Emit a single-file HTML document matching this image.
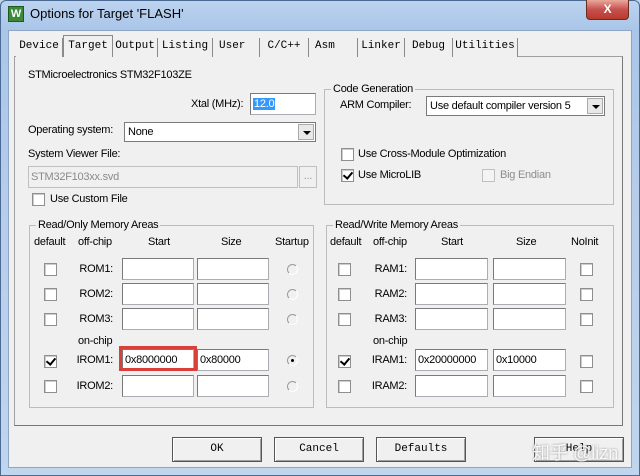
<!DOCTYPE html>
<html><head><meta charset="utf-8"><style>
*{box-sizing:border-box;margin:0;padding:0}
body{width:640px;height:476px;overflow:hidden;background:#c4d6ec;font-family:"Liberation Sans",Arial,sans-serif;font-size:11px;letter-spacing:-0.25px;color:#000;position:relative}
.a{position:absolute;white-space:nowrap}
#frame{position:absolute;left:0;top:0;width:640px;height:476px;background:linear-gradient(#bcd3ef,#a9c5e8 30px,#b6cdea 200px,#c0d5ee);border:1px solid #4a6a94;border-radius:6px 6px 0 0}
#client{position:absolute;left:8px;top:30px;width:624px;height:438px;background:#f0f0f0;border:1px solid #8ea6c4}
.tab{position:absolute;top:38px;height:19px;font-family:"Liberation Mono",monospace;font-size:11px;letter-spacing:0;line-height:17px;text-align:center;border-right:1px solid #8a8a8a;background:#f0f0f0}
#panel{position:absolute;left:14px;top:56px;width:609px;height:370px;border:1px solid #a0a0a0;border-right-color:#777;border-bottom-color:#777;background:#f0f0f0}
.grp{position:absolute;border:1px solid #bcbcbc}
.gt{position:absolute;background:#f0f0f0;padding:0 2px;top:-8px;left:6px;line-height:14px}
.in{position:absolute;background:#fff;border:1px solid #abadb3;border-top-color:#7a7a7a;border-left-color:#7a7a7a;height:22px;line-height:20px;padding-left:2px}
.cb{position:absolute;width:13px;height:13px;background:#fff;border:1px solid #8f8f8f;box-shadow:inset 1px 1px 0 #ccc}
.cb.k::after{content:"";position:absolute;left:3px;top:0px;width:4px;height:7px;border:solid #000;border-width:0 2px 2px 0;transform:rotate(40deg)}
.rd{position:absolute;width:11px;height:11px;border-radius:50%;border:1px solid #9a9a9a;border-right-color:#fff;border-bottom-color:#fff;background:#f0f0f0}
.rd.k::after{content:"";position:absolute;left:3px;top:3px;width:3px;height:3px;border-radius:50%;background:#000}
.sel{position:absolute;background:#fff;border:1px solid #7a7a7a;height:20px;line-height:18px;padding-left:3px}
.sel i{position:absolute;right:1px;top:1px;width:16px;height:16px;background:#e8e8e8;border:1px solid #aaa}
.sel i::after{content:"";position:absolute;left:4px;top:6px;border:4px solid transparent;border-top:4px solid #000;border-bottom:0}
.btn{position:absolute;top:437px;width:90px;height:25px;border:1px solid #555;background:#f0f0f0;box-shadow:inset 1px 1px 0 #fff,inset -1px -1px 0 #a0a0a0;font-family:"Liberation Mono",monospace;font-size:11px;letter-spacing:0;line-height:22px;text-align:center}
.lb{position:absolute;text-align:right;width:60px}
</style></head><body>
<div id="frame"></div>
<div class="a" style="left:8px;top:6px;width:16px;height:16px;background:#3a8a3a;border:1px solid #1e5a1e;color:#fff;font-size:11px;font-weight:bold;line-height:14px;text-align:center">W</div>
<div class="a" style="left:30px;top:6px;font-size:13px;letter-spacing:0">Options for Target 'FLASH'</div>
<div class="a" style="left:586px;top:0;width:43px;height:20px;background:linear-gradient(#e9a99a,#c75050 50%,#b83a2a);border:1px solid #6b2a22;border-top:0;border-radius:0 0 4px 4px;color:#fff;font-weight:bold;text-align:center;line-height:19px;font-size:12px">X</div>
<div id="client"></div>
<div id="panel"></div>
<div class="tab" style="left:16px;width:47px">Device</div>
<div class="tab" style="left:63px;width:50px;top:35px;height:22px;border:1px solid #8a8a8a;border-bottom:0;line-height:20px">Target</div>
<div class="tab" style="left:113px;width:45px">Output</div>
<div class="tab" style="left:158px;width:55px">Listing</div>
<div class="tab" style="left:213px;width:47px;text-align:left;padding-left:6px">User</div>
<div class="tab" style="left:260px;width:49px">C/C++</div>
<div class="tab" style="left:309px;width:49px;text-align:left;padding-left:6px">Asm</div>
<div class="tab" style="left:358px;width:47px">Linker</div>
<div class="tab" style="left:405px;width:48px">Debug</div>
<div class="tab" style="left:453px;width:65px">Utilities</div>

<div class="a" style="left:28px;top:69px">STMicroelectronics STM32F103ZE</div>
<div class="a" style="left:191px;top:98px">Xtal (MHz):</div>
<div class="in" style="left:250px;top:93px;width:66px"><span style="background:#3399ff;color:#fff;padding:0 1px">12.0</span></div>
<div class="a" style="left:28px;top:124px">Operating system:</div>
<div class="sel" style="left:124px;top:122px;width:192px">None<i></i></div>
<div class="a" style="left:28px;top:148px">System Viewer File:</div>
<div class="in" style="left:28px;top:166px;width:270px;background:#f0f0f0;color:#8a8a8a;border-color:#c0c0c0">STM32F103xx.svd</div>
<div class="a" style="left:299px;top:166px;width:18px;height:22px;border:1px solid #c0c0c0;color:#999;text-align:center;line-height:18px">...</div>
<div class="cb" style="left:32px;top:193px"></div>
<div class="a" style="left:50px;top:193px">Use Custom File</div>

<div class="grp" style="left:324px;top:89px;width:290px;height:116px"><div class="gt">Code Generation</div></div>
<div class="a" style="left:340px;top:99px">ARM Compiler:</div>
<div class="sel" style="left:426px;top:96px;width:179px">Use default compiler version 5<i></i></div>
<div class="cb" style="left:341px;top:148px"></div>
<div class="a" style="left:358px;top:148px">Use Cross-Module Optimization</div>
<div class="cb k" style="left:341px;top:169px"></div>
<div class="a" style="left:358px;top:169px">Use MicroLIB</div>
<div class="cb" style="left:482px;top:169px;background:#f4f4f4;border-color:#c0c0c0;box-shadow:none"></div>
<div class="a" style="left:500px;top:169px;color:#8d8d8d">Big Endian</div>

<div class="grp" style="left:29px;top:225px;width:285px;height:183px"><div class="gt">Read/Only Memory Areas</div></div>
<div class="a" style="left:34px;top:236px">default</div>
<div class="a" style="left:78px;top:236px">off-chip</div>
<div class="a" style="left:148px;top:236px">Start</div>
<div class="a" style="left:221px;top:236px">Size</div>
<div class="a" style="left:275px;top:236px">Startup</div>

<div class="grp" style="left:326px;top:225px;width:288px;height:183px"><div class="gt">Read/Write Memory Areas</div></div>
<div class="a" style="left:330px;top:236px">default</div>
<div class="a" style="left:373px;top:236px">off-chip</div>
<div class="a" style="left:441px;top:236px">Start</div>
<div class="a" style="left:516px;top:236px">Size</div>
<div class="a" style="left:571px;top:236px">NoInit</div>

<div class="a" style="left:78px;top:335px">on-chip</div>
<div class="a" style="left:373px;top:335px">on-chip</div>

<div class="cb" style="left:44px;top:263px"></div><div class="lb" style="left:53px;top:263px">ROM1:</div><div class="in" style="left:122px;top:258px;width:72px"></div><div class="in" style="left:197px;top:258px;width:72px"></div><div class="rd" style="left:287px;top:264px"></div>
<div class="cb" style="left:44px;top:288px"></div><div class="lb" style="left:53px;top:288px">ROM2:</div><div class="in" style="left:122px;top:283px;width:72px"></div><div class="in" style="left:197px;top:283px;width:72px"></div><div class="rd" style="left:287px;top:289px"></div>
<div class="cb" style="left:44px;top:313px"></div><div class="lb" style="left:53px;top:313px">ROM3:</div><div class="in" style="left:122px;top:308px;width:72px"></div><div class="in" style="left:197px;top:308px;width:72px"></div><div class="rd" style="left:287px;top:314px"></div>
<div class="cb k" style="left:44px;top:355px"></div><div class="lb" style="left:53px;top:354px">IROM1:</div><div class="in" style="left:122px;top:349px;width:72px">0x8000000</div><div class="in" style="left:197px;top:349px;width:72px">0x80000</div><div class="rd k" style="left:287px;top:355px"></div>
<div class="cb" style="left:44px;top:380px"></div><div class="lb" style="left:53px;top:380px">IROM2:</div><div class="in" style="left:122px;top:375px;width:72px"></div><div class="in" style="left:197px;top:375px;width:72px"></div><div class="rd" style="left:287px;top:381px"></div>
<div class="a" style="left:119px;top:346px;width:78px;height:25px;border:3px solid #d9403a"></div>

<div class="cb" style="left:338px;top:263px"></div><div class="lb" style="left:347px;top:263px">RAM1:</div><div class="in" style="left:415px;top:258px;width:73px"></div><div class="in" style="left:493px;top:258px;width:73px"></div><div class="cb" style="left:580px;top:263px"></div>
<div class="cb" style="left:338px;top:288px"></div><div class="lb" style="left:347px;top:288px">RAM2:</div><div class="in" style="left:415px;top:283px;width:73px"></div><div class="in" style="left:493px;top:283px;width:73px"></div><div class="cb" style="left:580px;top:288px"></div>
<div class="cb" style="left:338px;top:313px"></div><div class="lb" style="left:347px;top:313px">RAM3:</div><div class="in" style="left:415px;top:308px;width:73px"></div><div class="in" style="left:493px;top:308px;width:73px"></div><div class="cb" style="left:580px;top:313px"></div>
<div class="cb k" style="left:338px;top:355px"></div><div class="lb" style="left:347px;top:354px">IRAM1:</div><div class="in" style="left:415px;top:349px;width:73px">0x20000000</div><div class="in" style="left:493px;top:349px;width:73px">0x10000</div><div class="cb" style="left:580px;top:355px"></div>
<div class="cb" style="left:338px;top:380px"></div><div class="lb" style="left:347px;top:380px">IRAM2:</div><div class="in" style="left:415px;top:375px;width:73px"></div><div class="in" style="left:493px;top:375px;width:73px"></div><div class="cb" style="left:580px;top:380px"></div>

<div class="btn" style="left:172px">OK</div>
<div class="btn" style="left:274px">Cancel</div>
<div class="btn" style="left:376px">Defaults</div>
<div class="btn" style="left:534px">Help</div>
<div class="a" style="left:532px;top:439px;font-size:18px;letter-spacing:0;color:rgba(255,255,255,0.9);font-family:'Liberation Sans','Noto Sans CJK SC',sans-serif;text-shadow:0 0 2px #888">知乎 @lizn</div>
</body></html>
